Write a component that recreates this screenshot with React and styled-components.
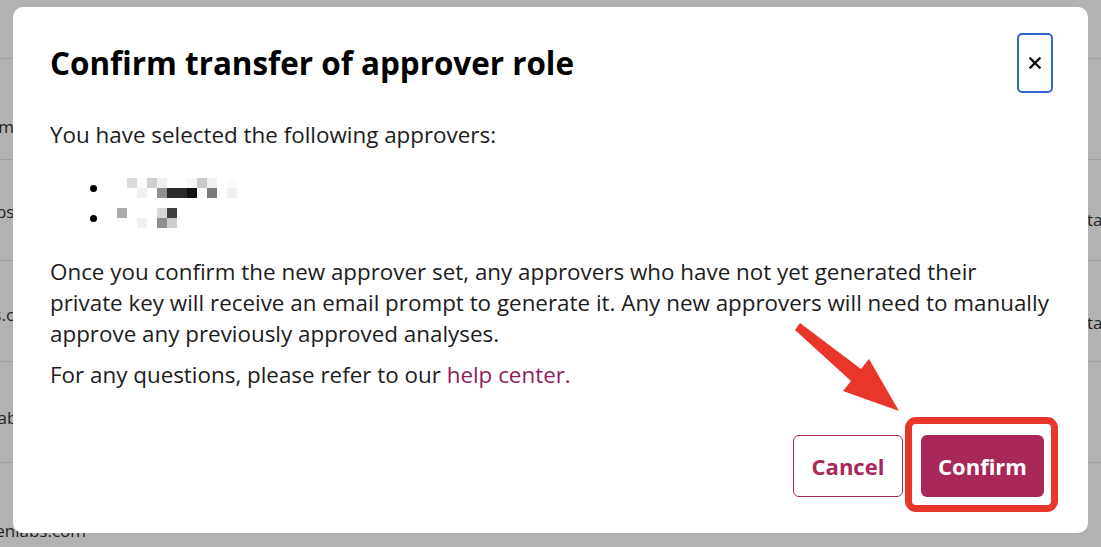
import React from 'react';
import styled, { createGlobalStyle } from 'styled-components';

const Global = createGlobalStyle`
  html, body { margin: 0; padding: 0; }
  body {
    font-family: "Open Sans", "Noto Sans", sans-serif;
    background: #ffffff;
    overflow: hidden;
  }
`;

const Page = styled.div`
  position: relative;
  width: 1101px;
  height: 547px;
  overflow: hidden;
  background: #ffffff;
`;

const PageHeader = styled.div`
  height: 59px;
  box-sizing: border-box;
  border-bottom: 1px solid #e4e4e4;
`;

const TableRow = styled.div`
  height: 101px;
  box-sizing: border-box;
  border-bottom: 1px solid #e4e4e4;
  display: flex;
  justify-content: space-between;
  align-items: flex-start;
  padding-top: ${(p) => p.$top}px;
  font-size: 17px;
  line-height: 20px;
  color: #333333;
`;

const EmailCell = styled.div`
  width: ${(p) => p.$w}px;
  overflow: hidden;
  white-space: nowrap;
  direction: rtl;
  text-align: right;
`;

const StatusCell = styled.div`
  width: 14px;
  overflow: hidden;
  white-space: nowrap;
  padding-top: ${(p) => p.$drop || 0}px;
`;

const Overlay = styled.div`
  position: absolute;
  inset: 0;
  background: rgba(0, 0, 0, 0.3);
  display: flex;
  justify-content: center;
  align-items: flex-start;
  padding-top: 7px;
`;

const Modal = styled.div`
  position: relative;
  width: 1075px;
  height: 526px;
  box-sizing: border-box;
  background: #ffffff;
  border-radius: 10px;
  padding: 26px 35px 36px 37px;
  display: flex;
  flex-direction: column;
  color: #1c1c1c;
`;

const Header = styled.div`
  display: flex;
  justify-content: space-between;
  align-items: center;
`;

const Title = styled.h2`
  margin: 0;
  font-size: 31.4px;
  line-height: 38px;
  font-weight: 700;
  color: #000000;
`;

const CloseButton = styled.button`
  width: 36px;
  height: 60px;
  box-sizing: border-box;
  border: 2px solid #2f66d0;
  border-radius: 5px;
  background: #ffffff;
  display: flex;
  align-items: center;
  justify-content: center;
  padding: 0;
`;

const Text = styled.p`
  margin: ${(p) => p.$mt}px 0 0 0;
  font-size: 22.4px;
  line-height: 31px;
  white-space: nowrap;
`;

const HelpLink = styled.a`
  color: #8c1d5c;
  text-decoration: none;
`;

const ApproverList = styled.ul`
  margin: 23px 0 0 0;
  padding: 0 0 0 40px;
  list-style: none;
`;

const ApproverItem = styled.li`
  display: flex;
  align-items: center;
  height: 30px;
  &::before {
    content: "";
    width: 7px;
    height: 7px;
    border-radius: 50%;
    background: #000000;
    margin-right: 20px;
    flex: none;
  }
`;

const Footer = styled.div`
  margin-top: auto;
  display: flex;
  justify-content: flex-end;
  gap: 18px;
  padding-right: 9px;
`;

const BaseButton = styled.button`
  height: 62px;
  box-sizing: border-box;
  border-radius: 6px;
  font-family: "Open Sans", "Noto Sans", sans-serif;
  font-size: 22px;
  font-weight: 700;
  padding: 0;
`;

const CancelButton = styled(BaseButton)`
  width: 110px;
  border: 1px solid #a82859;
  background: #ffffff;
  color: #a82859;
`;

const ConfirmWrap = styled.div`
  position: relative;
`;

const ConfirmButton = styled(BaseButton)`
  width: 123px;
  border: none;
  background: #a82859;
  color: #ffffff;
`;

const Highlight = styled.div`
  position: absolute;
  top: -18px;
  left: -16px;
  right: -14px;
  bottom: -15px;
  border: 7px solid #e8372a;
  border-radius: 11px;
  pointer-events: none;
`;

const Arrow = styled.svg`
  position: absolute;
  left: 790px;
  top: 315px;
  width: 115px;
  height: 100px;
`;

const W = null;
const names = [
  [
    [W, '#dcdcdc', '#fafafa', '#d0d0d0', '#f0f0f0', W, W, '#f8f8f8', '#cccccc', '#f2f2f2', W, '#fafafa'],
    [W, W, '#f0f0f0', W, '#8f8f8f', '#2a2a2a', '#2a2a2a', '#111111', '#fcfcfc', '#7a7a7a', W, '#f0f0f0'],
  ],
  [
    ['#ababab', W, W, W, '#d6d6d6', '#404040', W, W, W, W, W, W],
    [W, W, '#f0f0f0', W, '#8f8f8f', '#cccccc', W, W, W, W, W, W],
  ],
];

function Pixelated({ grid }) {
  return (
    <svg width="120" height="20" viewBox="0 0 120 20">
      {grid.map((row, r) =>
        row.map((c, i) =>
          c ? <rect key={`${r}-${i}`} x={i * 10} y={r * 10} width="10" height="10" fill={c} /> : null
        )
      )}
    </svg>
  );
}

export default function App() {
  return (
    <>
      <Global />
      <Page>
        <PageHeader />
        <TableRow $top={58}>
          <EmailCell $w={14}>jordan@example.com</EmailCell>
        </TableRow>
        <TableRow $top={42}>
          <EmailCell $w={53}>alex@acmelabs.com</EmailCell>
          <StatusCell $drop={8}>tal</StatusCell>
        </TableRow>
        <TableRow $top={44}>
          <EmailCell $w={40}>chris@acmelabs.com</EmailCell>
          <StatusCell $drop={8}>tal</StatusCell>
        </TableRow>
        <TableRow $top={46}>
          <EmailCell $w={64}>sam@acmelabs.com</EmailCell>
        </TableRow>
        <TableRow $top={58}>
          <EmailCell $w={86}>pat@acmenlabs.com</EmailCell>
        </TableRow>

        <Overlay>
          <Modal role="dialog" aria-modal="true">
            <Header>
              <Title>Confirm transfer of approver role</Title>
              <CloseButton aria-label="Close">
                <svg width="12" height="12" viewBox="0 0 12 12">
                  <path d="M1.5 1.5 L10.5 10.5 M10.5 1.5 L1.5 10.5" stroke="#111" strokeWidth="2.4" strokeLinecap="square" />
                </svg>
              </CloseButton>
            </Header>
            <Text $mt={26}>You have selected the following approvers:</Text>
            <ApproverList>
              {names.map((g, i) => (
                <ApproverItem key={i}>
                  <Pixelated grid={g} />
                </ApproverItem>
              ))}
            </ApproverList>
            <Text $mt={23}>
              Once you confirm the new approver set, any approvers who have not yet generated their
              <br />
              private key will receive an email prompt to generate it. Any new approvers will need to manually
              <br />
              approve any previously approved analyses.
            </Text>
            <Text $mt={10}>
              For any questions, please refer to our <HelpLink href="#">help center.</HelpLink>
            </Text>
            <Footer>
              <CancelButton>Cancel</CancelButton>
              <ConfirmWrap>
                <ConfirmButton>Confirm</ConfirmButton>
                <Highlight />
              </ConfirmWrap>
            </Footer>
          </Modal>
          <Arrow viewBox="790 315 115 100">
            <polygon
              points="800,323 861,369 869,359 899,411 843,391 851,381 795,330"
              fill="#e8372a"
            />
          </Arrow>
        </Overlay>
      </Page>
    </>
  );
}
